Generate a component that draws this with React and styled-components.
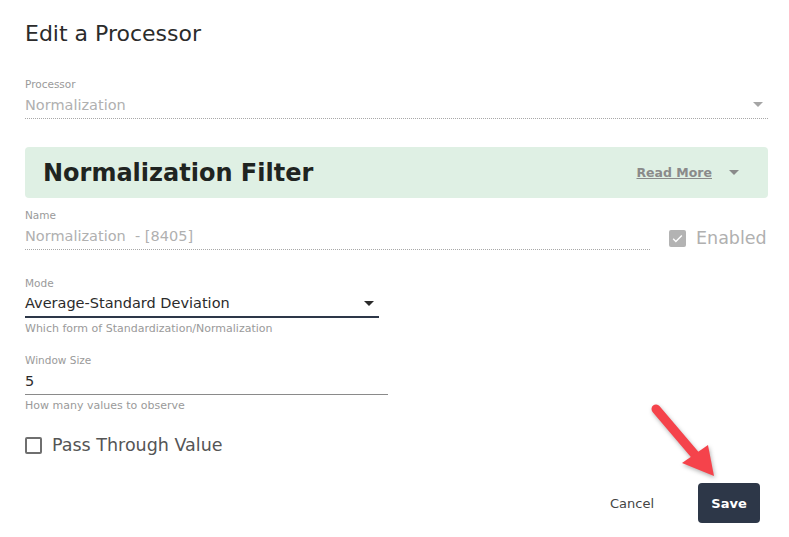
import React from "react";
import styled, { createGlobalStyle } from "styled-components";

const GlobalStyle = createGlobalStyle`
  body {
    margin: 0;
    background: #fff;
    font-family: "DejaVu Sans", "Open Sans", sans-serif;
    color: #333;
  }
`;

const Dialog = styled.div`
  position: relative;
  width: 789px;
  height: 537px;
  box-sizing: border-box;
  padding: 20px 21px 0 25px;
`;

const Title = styled.h1`
  margin: 0;
  font-size: 22px;
  font-weight: 400;
  color: #2b2b2b;
  line-height: 28px;
`;

const Field = styled.div`
  display: flex;
  flex-direction: column;
  width: ${(p) => p.width || "100%"};
  margin-top: ${(p) => p.top || 0}px;
`;

const Label = styled.label`
  font-size: 10.5px;
  color: #9a9a9a;
  line-height: 14px;
`;

const InputRow = styled.div`
  display: flex;
  align-items: center;
  height: ${(p) => (p.active ? 26 : 27)}px;
  font-size: 14.5px;
  color: ${(p) => (p.disabled ? "#b0b0b0" : "#2b2b2b")};
  border-bottom: ${(p) =>
    p.disabled ? "1px dotted #a8a8a8" : p.active ? "2px solid #2d3748" : "1px solid #8a8a8a"};
`;

const Caret = styled.span`
  margin-left: ${(p) => (p.inline ? "0" : "auto")};
  margin-right: ${(p) => p.right || 4}px;
  width: 0;
  height: 0;
  border-left: 5px solid transparent;
  border-right: 5px solid transparent;
  border-top: 5px solid ${(p) => p.color || "#9a9a9a"};
`;

const Helper = styled.div`
  font-size: 11px;
  color: #9a9a9a;
  margin-top: 4px;
  line-height: 14px;
`;

const Banner = styled.div`
  display: flex;
  align-items: center;
  height: 51px;
  margin-top: 28px;
  padding: 0 25px 0 18px;
  background: #dff0e4;
  border-radius: 4px;
`;

const BannerTitle = styled.h2`
  margin: 0;
  font-size: 24px;
  font-weight: 600;
  color: #1f2421;
`;

const ReadMore = styled.a`
  margin-left: auto;
  margin-right: 17px;
  font-size: 12.5px;
  font-weight: 700;
  color: #8a8a8a;
  text-decoration: underline;
`;

const NameRow = styled.div`
  display: flex;
  align-items: flex-end;
  gap: 19px;
  margin-top: 10px;
`;

const CheckWrap = styled.label`
  display: flex;
  align-items: center;
  gap: 10px;
  font-size: 17.5px;
  color: ${(p) => (p.disabled ? "#b0b0b0" : "#555")};
  margin-top: ${(p) => p.top || 0}px;
  margin-bottom: ${(p) => p.bottom || 0}px;
`;

const Box = styled.span`
  width: 17px;
  height: 17px;
  box-sizing: border-box;
  border-radius: 2px;
  display: flex;
  align-items: center;
  justify-content: center;
  background: ${(p) => (p.checked ? "#b3b3b3" : "#fff")};
  border: ${(p) => (p.checked ? "none" : "2px solid #6f6f6f")};
`;

const Footer = styled.div`
  display: flex;
  justify-content: flex-end;
  align-items: center;
  gap: 44px;
  margin-top: 28px;
  padding-right: 8px;
`;

const CancelButton = styled.button`
  border: none;
  background: none;
  font: inherit;
  font-size: 13px;
  color: #444;
  padding: 0;
`;

const SaveButton = styled.button`
  width: 62px;
  height: 40px;
  border: none;
  border-radius: 4px;
  background: #2d3748;
  color: #fff;
  font: inherit;
  font-size: 13px;
  font-weight: 700;
`;

const Pointer = styled.svg`
  position: absolute;
  left: 648px;
  top: 400px;
  filter: drop-shadow(1px 2px 2px rgba(0, 0, 0, 0.3));
`;

export default function App() {
  return (
    <>
      <GlobalStyle />
      <Dialog>
        <Title>Edit a Processor</Title>

        <Field top={29}>
          <Label>Processor</Label>
          <InputRow disabled>
            Normalization
            <Caret right={5} color="#a5a5a5" />
          </InputRow>
        </Field>

        <Banner>
          <BannerTitle>Normalization Filter</BannerTitle>
          <ReadMore>Read More</ReadMore>
          <Caret inline right={0} color="#8a8a8a" />
        </Banner>

        <NameRow>
          <Field width="625px" top={0}>
            <Label>Name</Label>
            <InputRow disabled>Normalization&nbsp; - [8405]</InputRow>
          </Field>
          <CheckWrap disabled bottom={2}>
            <Box checked>
              <svg width="13" height="13" viewBox="0 0 24 24" fill="none" stroke="#fff" strokeWidth="2.6">
                <path d="M4 12.5l5 5L20 6.5" />
              </svg>
            </Box>
            Enabled
          </CheckWrap>
        </NameRow>

        <Field width="354px" top={26}>
          <Label>Mode</Label>
          <InputRow active>
            Average-Standard Deviation
            <Caret right={5} color="#2b2b2b" />
          </InputRow>
          <Helper>Which form of Standardization/Normalization</Helper>
        </Field>

        <Field width="363px" top={17}>
          <Label>Window Size</Label>
          <InputRow>5</InputRow>
          <Helper>How many values to observe</Helper>
        </Field>

        <CheckWrap top={22}>
          <Box />
          Pass Through Value
        </CheckWrap>

        <Footer>
          <CancelButton>Cancel</CancelButton>
          <SaveButton>Save</SaveButton>
        </Footer>

        <Pointer width="80" height="85" viewBox="0 0 80 85">
          <line x1="8" y1="9" x2="48" y2="56" stroke="#f5434b" strokeWidth="9" strokeLinecap="round" />
          <polygon points="34,63 60,45 66,76" fill="#f5434b" />
        </Pointer>
      </Dialog>
    </>
  );
}
